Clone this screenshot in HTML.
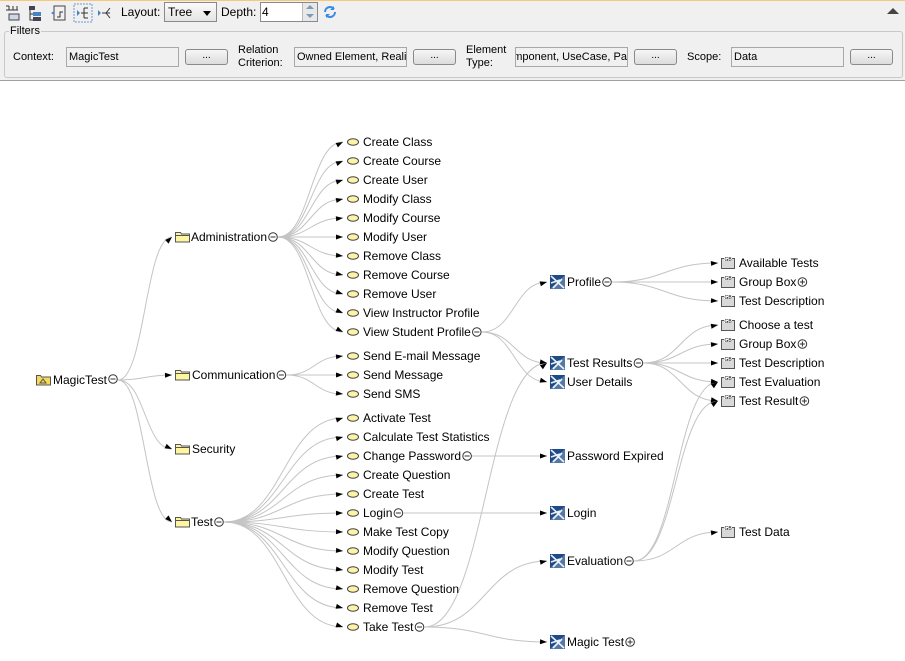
<!DOCTYPE html>
<html><head><meta charset="utf-8">
<style>
*{margin:0;padding:0;box-sizing:border-box}
body{width:905px;height:661px;overflow:hidden;background:#f0f0f0;font-family:"Liberation Sans",sans-serif;font-size:12px;color:#000;position:relative}
.topline{position:absolute;left:0;top:0;width:905px;height:1px;background:#f5c87a}
.abs{position:absolute}
.field{position:absolute;height:20px;border:1px solid #a8a8a8;background:#f0f0f0;font-size:11px;line-height:18px;padding-left:2px;overflow:hidden;white-space:nowrap}
.btn{position:absolute;width:43px;height:16px;border:1px solid #8a8a8a;border-radius:3px;background:linear-gradient(#f6f6f6,#dcdcdc);font-size:10px;text-align:center;line-height:12px}
.lbl{position:absolute;font-size:11px;line-height:13px}
#diag{position:absolute;left:0;top:80px;width:905px;height:581px;background:#fff;border-top:1px solid #a0a0a0}
svg text{font-family:"Liberation Sans",sans-serif;font-size:12px}
</style></head><body>
<div class="topline"></div>
<svg class="abs" style="left:0;top:2px" width="120" height="22">
 <g fill="#555">
  <rect x="9" y="12" width="10" height="6" fill="#cfd8e0" stroke="#445"/>
  <path d="M6 4h3M9 4v4M13 4v4M17 4v4M6 8h12" stroke="#333" fill="none"/>
  <rect x="29" y="4" width="6" height="4" fill="#445"/><rect x="33" y="10" width="8" height="4" fill="#4a84c0"/><rect x="33" y="15" width="8" height="4" fill="#445"/><path d="M30 8v10h3M30 12h3" stroke="#333" fill="none"/>
  <rect x="54" y="4" width="11" height="14" fill="none" stroke="#444"/><path d="M51 11l3-2v4z" fill="#4a84c0"/><path d="M57 15h3v-5h3" stroke="#333" fill="none"/>
  <rect x="74" y="2" width="18" height="18" fill="none" stroke="#6a9ad0" stroke-dasharray="2,1"/><path d="M77 8l3 3-3 3z" fill="#4a84c0"/><path d="M81 11h3M84 6v10M84 6h4M84 11h4M84 16h4" stroke="#333" fill="none"/>
  <path d="M98 8l3 3-3 3z" fill="#4a84c0"/><path d="M102 11h4M106 11l4-5M106 11l4 5M106 11h4" stroke="#333" fill="none"/>
 </g>
</svg>
<div class="lbl" style="left:121px;top:6px;font-size:12px">Layout:</div>
<div class="abs" style="left:164px;top:2px;width:53px;height:20px;border:1px solid #8a8a8a;background:linear-gradient(#fafafa,#e4e4e4);font-size:12px;line-height:18px;padding-left:3px">Tree<span style="position:absolute;right:5px;top:8px;border:4px solid transparent;border-top:5px solid #000"></span></div>
<div class="lbl" style="left:221px;top:6px;font-size:12px">Depth:</div>
<div class="abs" style="left:260px;top:2px;width:58px;height:20px;border:1px solid #8a8a8a;background:#fff;font-size:12px;line-height:18px;padding-left:1px">4<span style="position:absolute;right:0;top:0;width:15px;height:18px;background:#e8e8e8;border-left:1px solid #bbb"><span style="position:absolute;left:3px;top:2px;border:4px solid transparent;border-bottom:4px solid #7a9ab8;border-top:0"></span><span style="position:absolute;left:3px;top:11px;border:4px solid transparent;border-top:4px solid #7a9ab8;border-bottom:0"></span></span></div>
<svg class="abs" style="left:323px;top:5px" width="14" height="14"><path d="M2 7a5 5 0 0 1 9-3M12 7a5 5 0 0 1-9 3" stroke="#3a8ae0" stroke-width="2" fill="none"/><path d="M11 1v4h-4z M3 13v-4h4z" fill="#3a8ae0"/></svg>
<svg class="abs" style="left:887px;top:7px" width="12" height="8"><path d="M0 7l6-6 6 6z" fill="#444"/></svg>
<div class="abs" style="left:4px;top:31px;width:899px;height:47px;border:1px solid #c8c8c8;border-radius:3px"></div>
<div class="lbl" style="left:9px;top:25px;background:#f0f0f0;padding:0 1px;font-size:11px">Filters</div>
<div class="lbl" style="left:13px;top:51px">Context:</div>
<div class="field" style="left:66px;top:47px;width:113px">MagicTest</div>
<div class="btn" style="left:185px;top:49px">...</div>
<div class="lbl" style="left:238px;top:44px">Relation<br>Criterion:</div>
<div class="field" style="left:294px;top:47px;width:113px">Owned Element, Realiz</div>
<div class="btn" style="left:413px;top:49px">...</div>
<div class="lbl" style="left:466px;top:44px">Element<br>Type:</div>
<div class="field" style="left:515px;top:47px;width:113px;direction:rtl;text-align:left"><span style="direction:ltr;unicode-bidi:embed">Component, UseCase, Pa</span></div>
<div class="btn" style="left:634px;top:49px">...</div>
<div class="lbl" style="left:687px;top:51px">Scope:</div>
<div class="field" style="left:731px;top:47px;width:113px">Data</div>
<div class="btn" style="left:850px;top:49px">...</div>

<div id="diag">
<svg id="sv" width="905" height="581" viewBox="0 80 905 581" style="position:absolute;left:0;top:-1px">
<defs>
 <g id="fold"><path d="M0.5 2.5h5l1 1.5h8v8h-14z" fill="#fdf5a0" stroke="#555"/><path d="M0.5 5.5h14" stroke="#555"/></g>
 <g id="uc"><ellipse cx="6" cy="4" rx="5.5" ry="3.2" fill="#fbf3a6" stroke="#444"/></g>
 <g id="dg"><rect x="0" y="0" width="15" height="14" fill="#e8eef6"/><path d="M0 0h15v14h-15z" fill="#1f4a86"/><path d="M1 1l13 12M3 13l9-9M1 8l9-3" stroke="#e6f0fa" stroke-width="1.6"/><path d="M0 14l15 -14v14z" fill="#fff" opacity="0.25"/></g>
 <g id="gb"><rect x="0.5" y="2.5" width="13" height="10" fill="#d8d8d8" stroke="#555"/><rect x="3" y="0" width="8" height="5" fill="#fff"/><text x="3.5" y="5" style="font-size:5px">GB</text></g>
 <g id="minus"><circle cx="5" cy="5" r="4.3" fill="#fff" stroke="#333"/><path d="M2.5 5h5" stroke="#333"/></g>
 <g id="plus"><circle cx="5" cy="5" r="4.3" fill="#fff" stroke="#333"/><path d="M2.5 5h5M5 2.5v5" stroke="#333"/></g>
</defs>
<g id="edges" fill="none" stroke="#c4c4c4" stroke-width="1"></g>
<g id="arrows" fill="#000"></g>
<g id="nodes">
<path d="M36.5 375.5h4l1 1.5h9v8h-14z" fill="#f6d85a" stroke="#555"/><path d="M40 383l3-4 3 4z" fill="none" stroke="#555"/><text x="53" y="384">MagicTest</text><use href="#minus" x="110" y="374"/>
<use href="#fold" x="175" y="230"/><text x="191" y="241">Administration</text><use href="#minus" x="272" y="232"/>
<use href="#fold" x="175" y="368"/><text x="192" y="379">Communication</text><use href="#minus" x="281" y="370"/>
<use href="#fold" x="175" y="442"/><text x="192" y="453">Security</text>
<use href="#fold" x="175" y="515"/><text x="191" y="526">Test</text><use href="#minus" x="217" y="517"/>
<use href="#uc" x="347" y="138"/><text x="363" y="146">Create Class</text>
<use href="#uc" x="347" y="157"/><text x="363" y="165">Create Course</text>
<use href="#uc" x="347" y="176"/><text x="363" y="184">Create User</text>
<use href="#uc" x="347" y="195"/><text x="363" y="203">Modify Class</text>
<use href="#uc" x="347" y="214"/><text x="363" y="222">Modify Course</text>
<use href="#uc" x="347" y="233"/><text x="363" y="241">Modify User</text>
<use href="#uc" x="347" y="252"/><text x="363" y="260">Remove Class</text>
<use href="#uc" x="347" y="271"/><text x="363" y="279">Remove Course</text>
<use href="#uc" x="347" y="290"/><text x="363" y="298">Remove User</text>
<use href="#uc" x="347" y="309"/><text x="363" y="317">View Instructor Profile</text>
<use href="#uc" x="347" y="328"/><text x="363" y="336">View Student Profile</text><use href="#minus" x="473" y="327"/>
<use href="#uc" x="347" y="352"/><text x="363" y="360">Send E-mail Message</text>
<use href="#uc" x="347" y="371"/><text x="363" y="379">Send Message</text>
<use href="#uc" x="347" y="390"/><text x="363" y="398">Send SMS</text>
<use href="#uc" x="347" y="414"/><text x="363" y="422">Activate Test</text>
<use href="#uc" x="347" y="433"/><text x="363" y="441">Calculate Test Statistics</text>
<use href="#uc" x="347" y="452"/><text x="363" y="460">Change Password</text><use href="#minus" x="467" y="451"/>
<use href="#uc" x="347" y="471"/><text x="363" y="479">Create Question</text>
<use href="#uc" x="347" y="490"/><text x="363" y="498">Create Test</text>
<use href="#uc" x="347" y="509"/><text x="363" y="517">Login</text><use href="#minus" x="393" y="508"/>
<use href="#uc" x="347" y="528"/><text x="363" y="536">Make Test Copy</text>
<use href="#uc" x="347" y="547"/><text x="363" y="555">Modify Question</text>
<use href="#uc" x="347" y="566"/><text x="363" y="574">Modify Test</text>
<use href="#uc" x="347" y="585"/><text x="363" y="593">Remove Question</text>
<use href="#uc" x="347" y="604"/><text x="363" y="612">Remove Test</text>
<use href="#uc" x="347" y="623"/><text x="363" y="631">Take Test</text><use href="#minus" x="418" y="622"/>
<use href="#dg" x="550" y="275"/><text x="567" y="286">Profile</text><use href="#minus" x="591" y="277"/>
<use href="#dg" x="550" y="356"/><text x="567" y="367">Test Results</text><use href="#minus" x="638" y="358"/>
<use href="#dg" x="550" y="375"/><text x="567" y="386">User Details</text>
<use href="#dg" x="550" y="449"/><text x="567" y="460">Password Expired</text>
<use href="#dg" x="550" y="506"/><text x="567" y="517">Login</text>
<use href="#dg" x="550" y="554"/><text x="567" y="565">Evaluation</text><use href="#minus" x="625" y="556"/>
<use href="#dg" x="550" y="635"/><text x="567" y="646">Magic Test</text><use href="#plus" x="627" y="637"/>
<use href="#gb" x="721" y="256"/><text x="739" y="267">Available Tests</text>
<use href="#gb" x="721" y="275"/><text x="739" y="286">Group Box</text><use href="#plus" x="797" y="277"/>
<use href="#gb" x="721" y="294"/><text x="739" y="305">Test Description</text>
<use href="#gb" x="721" y="318"/><text x="739" y="329">Choose a test</text>
<use href="#gb" x="721" y="337"/><text x="739" y="348">Group Box</text><use href="#plus" x="797" y="339"/>
<use href="#gb" x="721" y="356"/><text x="739" y="367">Test Description</text>
<use href="#gb" x="721" y="375"/><text x="739" y="386">Test Evaluation</text>
<use href="#gb" x="721" y="394"/><text x="739" y="405">Test Result</text><use href="#plus" x="802" y="396"/>
<use href="#gb" x="721" y="525"/><text x="739" y="536">Test Data</text>
</g>
</svg>
</div>
<script>
var NS='http://www.w3.org/2000/svg';
var E=document.getElementById('edges'),A=document.getElementById('arrows');
var ends={};
// place +/- right after text
var kids=document.getElementById('nodes').children;
for(var i=1;i<kids.length;i++){
 var k=kids[i],p=kids[i-1];
 if(k.tagName==='use'&&/minus|plus/.test(k.getAttribute('href'))&&p.tagName==='text'){
  var x=parseFloat(p.getAttribute('x'))+p.getComputedTextLength()+1;
  k.setAttribute('x',x.toFixed(1));
  ends[p.getAttribute('y')+'_'+p.textContent]=x+10;
 }
}
function src(y,t){return ends[y+'_'+t]||0;}
function edge(sx,sy,tx,ty){
 var dx=(tx-sx)*0.5;
 var p=document.createElementNS(NS,'path');
 p.setAttribute('d','M'+sx+' '+sy+'C'+(sx+dx)+' '+sy+' '+(tx-dx)+' '+ty+' '+tx+' '+ty);
 E.appendChild(p);
 var a=Math.atan2((ty-sy)*0.35, tx-sx);
 var c=Math.cos(a),s=Math.sin(a),L=7,W=2.5;
 var q=document.createElementNS(NS,'path');
 var bx=tx-L*c,by=ty-L*s;
 q.setAttribute('d','M'+tx+' '+ty+'L'+(bx-W*s)+' '+(by+W*c)+'L'+(bx+W*s)+' '+(by-W*c)+'Z');
 A.appendChild(q);
}
function fan(sx,sy,tx,list){list.forEach(function(y){edge(sx,sy,tx,y)});}
fan(src(384,'MagicTest')||121,380,172,[237,375,449,522]);
fan(src(241,'Administration')||283,237,343,[142,161,180,199,218,237,256,275,294,313,332]);
fan(src(379,'Communication')||292,375,343,[356,375,394]);
fan(src(526,'Test')||228,522,343,[418,437,456,475,494,513,532,551,570,589,608,627]);
fan(src(336,'View Student Profile')||484,332,547,[282,363,382]);
fan(src(631,'Take Test')||429,627,547,[363,561,642]);
edge(src(460,'Change Password')||478,456,547,456);
edge(src(517,'Login')||404,513,547,513);
fan(src(286,'Profile')||602,282,718,[263,282,301]);
fan(src(367,'Test Results')||649,363,718,[325,344,363,382,401]);
fan(src(565,'Evaluation')||636,561,718,[382,401,532]);
</script>
</body></html>
